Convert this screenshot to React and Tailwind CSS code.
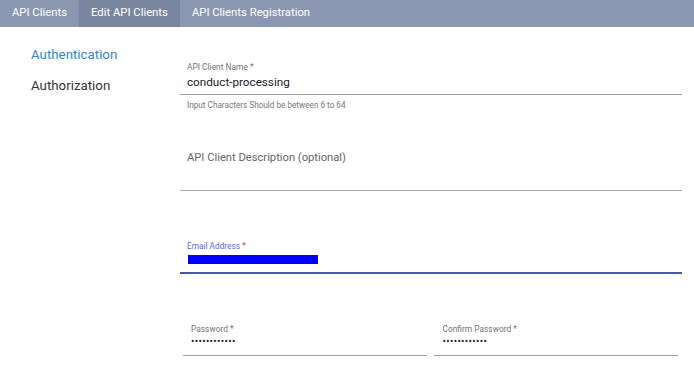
export default function App() {
  return (
    <div className="w-[694px] h-[366px] bg-white font-['Roboto',sans-serif] overflow-hidden">
      <div className="h-[27px] bg-[#8b97b1] flex text-white text-[11.3px]">
        <div className="px-[12px] flex items-center">API Clients</div>
        <div className="px-[12px] flex items-center bg-[#7a86a0]">Edit API Clients</div>
        <div className="px-[12px] flex items-center">API Clients Registration</div>
      </div>
      <div className="flex">
        <div className="w-[180px] pl-[31px] pt-[19px] flex flex-col gap-[14px]">
          <div className="text-[13.3px] leading-[17px] text-[#3a84c1]">Authentication</div>
          <div className="text-[13.3px] leading-[17px] text-[#333]">Authorization</div>
        </div>
        <div className="flex-1 mr-[12px]">
          <div className="mt-[35px] pl-[7px] pb-[4px] border-b border-[#9e9e9e]">
            <div className="text-[8.4px] leading-[11px] text-[#757575]">API Client Name *</div>
            <div className="mt-[1px] text-[11.7px] leading-[16px] text-[#1a1a1a]">conduct-processing</div>
          </div>
          <div className="mt-[5px] pl-[7px] text-[8.2px] leading-[10px] text-[#777]">Input Characters Should be between 6 to 64</div>

          <div className="mt-[41px] pl-[7px] pb-[25px] border-b border-[#a8a8a8]">
            <div className="text-[11.2px] leading-[14px] text-[#666]">API Client Description (optional)</div>
          </div>

          <div className="mt-[50px] pl-[7px] pb-[8px] border-b-2 border-[#4558b0]">
            <div className="text-[8.3px] leading-[11px] text-[#5c6bc0]">Email Address <span className="text-[#e53935]">*</span></div>
            <div className="mt-[3px] ml-[1px] w-[130px] h-[9px] bg-[#0000ff]"></div>
          </div>

          <div className="mt-[50px] pl-[3px] pr-[4px] flex gap-[7px]">
            <div className="flex-1 pl-[8px] pb-[8px] border-b border-[#9e9e9e]">
              <div className="text-[8.4px] leading-[11px] text-[#757575]">Password *</div>
              <div className="mt-[2px] text-[10px] leading-[10px] text-[#222] tracking-[0.35px]">••••••••••••</div>
            </div>
            <div className="flex-1 pl-[9px] pb-[8px] border-b border-[#9e9e9e]">
              <div className="text-[8.4px] leading-[11px] text-[#757575]">Confirm Password *</div>
              <div className="mt-[2px] text-[10px] leading-[10px] text-[#222] tracking-[0.35px]">••••••••••••</div>
            </div>
          </div>
        </div>
      </div>
    </div>
  );
}
